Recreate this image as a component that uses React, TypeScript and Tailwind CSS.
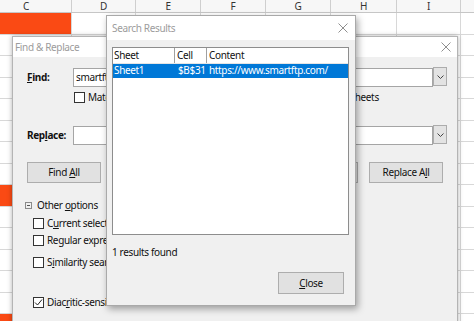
import React from "react";

const colW = ["w-[72px]", "w-[64px]", "w-[65px]", "w-[65px]", "w-[65px]", "w-[66px]", "w-[64px]", "w-[20px]"];
const colL = ["C", "D", "E", "F", "G", "H", "I", ""];
const rowH = ["h-[22px]", "h-[21px]", "h-[22px]", "h-[21px]", "h-[22px]", "h-[21px]", "h-[22px]", "h-[21px]", "h-[22px]", "h-[21px]", "h-[22px]", "h-[21px]", "h-[22px]", "h-[21px]", "h-[22px]"];
const orangeRows = [0, 8, 14];

function Sheet() {
  return (
    <div className="flex flex-col">
      <div className="flex h-[13px] bg-[#f7f7f7] border-b border-[#c6c6c6]">
        {colL.map((l, i) => (
          <div
            key={i}
            className={`${colW[i]} shrink-0 border-r border-[#cfcfcf] text-[10px] leading-[12px] text-[#333] ${i === 0 ? "pl-[23px] text-left" : "text-center"}`}
          >
            {l}
          </div>
        ))}
      </div>
      {rowH.map((h, r) => (
        <div key={r} className={`flex ${h}`}>
          {colW.map((w, c) => (
            <div
              key={c}
              className={`${w} shrink-0 border-r border-b border-[#d8d8d8] ${c === 0 && orangeRows.includes(r) ? "bg-[#fa4a14]" : "bg-white"}`}
            />
          ))}
        </div>
      ))}
    </div>
  );
}

function CloseX() {
  return (
    <svg width="10" height="10" viewBox="0 0 10 10">
      <path d="M0.5 0.5 L9.5 9.5 M9.5 0.5 L0.5 9.5" stroke="#8f8f8f" strokeWidth="1" fill="none" />
    </svg>
  );
}

function Check({ checked = false }: { checked?: boolean }) {
  return (
    <span className="w-[11px] h-[11px] shrink-0 border border-[#333] bg-white flex items-center justify-center">
      {checked && (
        <svg width="9" height="9" viewBox="0 0 9 9">
          <path d="M1 4.5 L3.5 7 L8 1.5" stroke="#222" strokeWidth="1" fill="none" />
        </svg>
      )}
    </span>
  );
}

function Combo({ text }: { text: string }) {
  return (
    <div className="flex-1 flex h-[19px]">
      <div className="flex-1 bg-white border border-[#a5a5a5] pl-[2px] text-[10px] leading-[17px] overflow-hidden whitespace-nowrap">{text}</div>
      <div className="w-[14px] h-[19px] -mt-[1px] bg-[#e3e3e3] border border-[#acacac] flex items-center justify-center">
        <svg width="7" height="4" viewBox="0 0 7 4">
          <path d="M0.5 0.5 L3.5 3.5 L6.5 0.5" stroke="#444" strokeWidth="1" fill="none" />
        </svg>
      </div>
    </div>
  );
}

function Btn({ children, w }: { children: React.ReactNode; w: string }) {
  return (
    <div className={`${w} h-[21px] bg-[#e1e1e1] border border-[#adadad] flex items-center justify-center text-[10px] text-[#111]`}>
      <span>{children}</span>
    </div>
  );
}

function FindReplace() {
  return (
    <div className="absolute left-[12px] top-[36px] w-[446px] h-[300px] bg-[#f0f0f0] border border-[#b4b4b4] shadow-[0_0_5px_rgba(0,0,0,0.3)] flex flex-col">
      <div className="h-[20px] bg-white flex items-center justify-between pl-[2px] pr-[6px] shrink-0">
        <span className="text-[10px] text-[#9c9c9c]">Find &amp; Replace</span>
        <CloseX />
      </div>
      <div className="flex flex-col pl-[14px] pr-[10px] text-[10px] text-[#111]">
        <div className="mt-[11px] flex items-center">
          <div className="w-[46px] font-bold"><u>F</u>ind:</div>
          <Combo text="smartftp.com" />
        </div>
        <div className="mt-[5px] h-[11px] flex items-center ml-[47px]">
          <Check />
          <span className="ml-[3px] mr-[20px]">Match case</span>
          <Check />
          <span className="ml-[3px]">Entire cells</span>
          <div className="ml-[106px] flex items-center">
            <Check />
            <span className="ml-[3px]">All sheets</span>
          </div>
        </div>
        <div className="mt-[23px] flex items-center">
          <div className="w-[46px] font-bold">Rep<u>l</u>ace:</div>
          <Combo text="" />
        </div>
        <div className="mt-[17px] flex items-center pr-[4px]">
          <Btn w="w-[74px]">Find <u>A</u>ll</Btn>
          <div className="ml-auto" />
          <Btn w="w-[74px]"><u>R</u>eplace</Btn>
          <div className="ml-[11px]" />
          <Btn w="w-[74px]">Replace A<u>l</u>l</Btn>
        </div>
        <div className="mt-[16px] h-[12px] flex items-center -ml-[2px]">
          <span className="w-[7px] h-[7px] border border-[#8a8a8a] flex items-center justify-center">
            <span className="w-[3px] h-[1px] bg-[#555]" />
          </span>
          <span className="ml-[5px]">Other <u>o</u>ptions</span>
        </div>
        <div className="mt-[7px] h-[11px] flex items-center ml-[6px]">
          <Check />
          <span className="ml-[3px]">C<u>u</u>rrent selection only</span>
        </div>
        <div className="mt-[6px] h-[11px] flex items-center ml-[6px]">
          <Check />
          <span className="ml-[3px]">Re<u>g</u>ular expressions</span>
        </div>
        <div className="mt-[11px] h-[11px] flex items-center ml-[6px]">
          <Check />
          <span className="ml-[3px]">S<u>i</u>milarity search</span>
        </div>
        <div className="mt-[29px] h-[11px] flex items-center ml-[6px]">
          <Check checked />
          <span className="ml-[3px]">Diac<u>r</u>itic-sensitive</span>
        </div>
      </div>
    </div>
  );
}

function SearchResults() {
  return (
    <div className="absolute left-[106px] top-[15px] w-[250px] h-[291px] bg-[#f0f0f0] border border-[#a9a9a9] shadow-[2px_3px_7px_rgba(0,0,0,0.35)] flex flex-col">
      <div className="h-[24px] bg-white flex items-center justify-between pl-[5px] pr-[7px] shrink-0">
        <span className="text-[10px] text-[#9c9c9c]">Search Results</span>
        <CloseX />
      </div>
      <div className="flex flex-col pl-[5px] pr-[6px] text-[10px] text-[#111]">
        <div className="mt-[7px] h-[188px] bg-white border border-[#8d8d8d] flex flex-col">
          <div className="h-[16px] flex border-b border-[#e5e5e5] leading-[15px]">
            <div className="w-[62px] pl-[1px] border-r border-[#a0a0a0]">Sheet</div>
            <div className="w-[32px] pl-[2px] border-r border-[#a0a0a0]">Cell</div>
            <div className="flex-1 pl-[2px]">Content</div>
          </div>
          <div className="h-[14px] flex bg-[#0078d7] text-white leading-[13px]">
            <div className="w-[62px] pl-[1px]">Sheet1</div>
            <div className="w-[32px] pl-[3px]">$B$31</div>
            <div className="flex-1 pl-[2px]">https://www.smartftp.com/</div>
          </div>
        </div>
        <div className="mt-[10px] h-[14px] leading-[14px]">1 results found</div>
        <div className="mt-[13px] self-end mr-[5px]">
          <Btn w="w-[66px] h-[22px]"><u>C</u>lose</Btn>
        </div>
      </div>
    </div>
  );
}

export default function App() {
  return (
    <div
      className="relative w-[474px] h-[321px] overflow-hidden bg-white tracking-[-0.35px]"
      style={{ fontFamily: '"Noto Sans", "Open Sans", sans-serif' }}
    >
      <Sheet />
      <FindReplace />
      <SearchResults />
    </div>
  );
}
